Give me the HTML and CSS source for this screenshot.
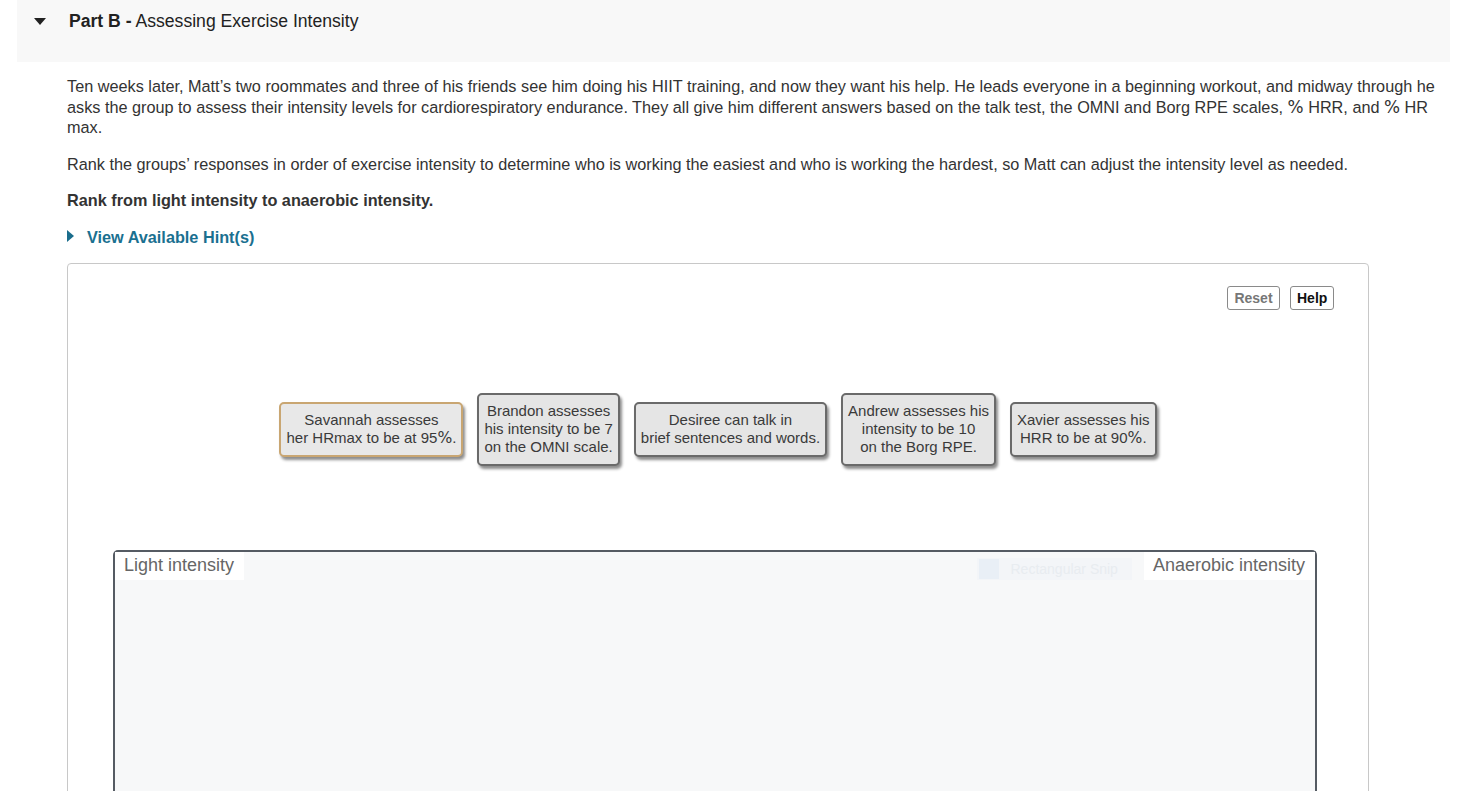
FILE: index.html
```html
<!DOCTYPE html>
<html lang="en">
<head>
<meta charset="utf-8">
<title>Part B - Assessing Exercise Intensity</title>
<link rel="stylesheet" href="styles.css">
</head>
<body>
<div class="page">
  <div class="part-header">
    <span class="caret"></span>
    <h2 class="part-title"><b>Part B -</b> Assessing Exercise Intensity</h2>
  </div>
  <div class="content">
    <p class="para">Ten weeks later, Matt’s two roommates and three of his friends see him doing his HIIT training, and now they want his help. He leads everyone in a beginning workout, and midway through he asks the group to assess their intensity levels for cardiorespiratory endurance. They all give him different answers based on the talk test, the OMNI and Borg RPE scales, <span class="pct">%</span> HRR, and <span class="pct">%</span> HR max.</p>
    <p class="para">Rank the groups’ responses in order of exercise intensity to determine who is working the easiest and who is working the hardest, so Matt can adjust the intensity level as needed.</p>
    <p class="para strong">Rank from light intensity to anaerobic intensity.</p>
    <div class="hint"><span class="hint-caret"></span><span class="hint-text">View Available Hint(s)</span></div>
    <div class="rank-box">
      <div class="toolbar">
        <button class="btn btn-reset">Reset</button>
        <button class="btn btn-help">Help</button>
      </div>
      <div class="cards">
        <div class="card card-selected">Savannah assesses<br>her HRmax to be at 95<span class="pct">%</span>.</div>
        <div class="card">Brandon assesses<br>his intensity to be 7<br>on the OMNI scale.</div>
        <div class="card">Desiree can talk in<br>brief sentences and words.</div>
        <div class="card">Andrew assesses his<br>intensity to be 10<br>on the Borg RPE.</div>
        <div class="card">Xavier assesses his<br>HRR to be at 90<span class="pct">%</span>.</div>
      </div>
      <div class="dropzone">
        <div class="dz-head">
          <span class="dz-label">Light intensity</span>
          <span class="dz-right">
            <span class="ghost"><span class="ghost-icon"></span>Rectangular Snip</span>
            <span class="dz-label">Anaerobic intensity</span>
          </span>
        </div>
      </div>
    </div>
  </div>
</div>
</body>
</html>
```

FILE: styles.css
```css
html, body {
  margin: 0;
  padding: 0;
  background: #ffffff;
  overflow: hidden;
}
body {
  font-family: "Liberation Sans", Arial, sans-serif;
  color: #333333;
}
.page {
  width: 1460px;
  height: 791px;
  overflow: hidden;
}
.part-header {
  margin: 0 10px 0 17px;
  height: 62px;
  background: #f8f8f8;
  display: flex;
  align-items: flex-start;
  padding-top: 10px;
  box-sizing: border-box;
}
.caret {
  width: 0;
  height: 0;
  border-left: 6.5px solid transparent;
  border-right: 6.5px solid transparent;
  border-top: 7px solid #222222;
  margin: 8px 0 0 17px;
}
.part-title {
  margin: 0 0 0 23px;
  font-size: 17.6px;
  font-weight: normal;
  color: #222222;
  line-height: 22px;
}
.part-title b {
  font-weight: bold;
}
.content {
  padding: 14px 20px 0 67px;
}
.para {
  margin: 0 0 16px 0;
  font-size: 16.25px;
  line-height: 20.5px;
  color: #333333;
}
.strong {
  font-weight: bold;
  margin-bottom: 17px;
}
.pct {
  font-family: "DejaVu Sans", sans-serif;
  font-size: 1.04em;
  line-height: 0.9;
}
.hint {
  display: flex;
  align-items: center;
  height: 20px;
  margin-bottom: 15px;
}
.hint-caret {
  width: 0;
  height: 0;
  border-top: 6px solid transparent;
  border-bottom: 6px solid transparent;
  border-left: 7px solid #1a6d8c;
  margin-top: -4px;
}
.hint-text {
  margin-left: 13px;
  font-weight: bold;
  font-size: 16.25px;
  color: #1a7090;
}
.rank-box {
  width: 1302px;
  height: 560px;
  box-sizing: border-box;
  border: 1px solid #c8c8c8;
  border-radius: 4px;
  padding-top: 22px;
}
.toolbar {
  display: flex;
  justify-content: flex-end;
  gap: 10px;
  padding-right: 34px;
  height: 24px;
}
.btn {
  font-family: "Liberation Sans", Arial, sans-serif;
  font-size: 14px;
  font-weight: bold;
  background: #ffffff;
  border: 1px solid #8a8a8a;
  border-radius: 3px;
  padding: 0 6px;
  height: 24px;
  line-height: 20px;
}
.btn-reset {
  color: #777777;
  width: 53px;
}
.btn-help {
  color: #111111;
  width: 44px;
}
.cards {
  height: 240px;
  display: flex;
  justify-content: center;
  align-items: center;
  gap: 14px;
  padding-left: 0;
}
.card {
  background: #e5e5e5;
  border: 2px solid #6a6a6a;
  border-radius: 5px;
  box-shadow: 2px 3px 3px rgba(0, 0, 0, 0.45);
  padding: 7px 5px 8px;
  font-size: 15px;
  line-height: 18px;
  color: #3a3a3a;
  text-align: center;
  white-space: nowrap;
}
.card-selected {
  border-color: #c9a672;
  background: #e8e8e8;
}
.dropzone {
  margin: 0 51px 0 45px;
  height: 300px;
  border: 2px solid #555b63;
  border-bottom: none;
  border-radius: 5px 5px 0 0;
  background: #f7f8f9;
}
.dz-head {
  display: flex;
  justify-content: space-between;
  align-items: flex-start;
}
.dz-right {
  display: flex;
  align-items: flex-start;
}
.dz-label {
  background: #ffffff;
  color: #666666;
  font-size: 18px;
  line-height: 26px;
  padding: 0 10px 2px 9px;
}
.ghost {
  display: flex;
  align-items: center;
  margin-top: 6px;
  margin-right: 12px;
  padding: 0 14px 0 2px;
  height: 22px;
  background: #f3f5f8;
  color: #e8ecf0;
  font-size: 14px;
}
.ghost-icon {
  width: 20px;
  height: 20px;
  background: #e9eff6;
  margin-right: 12px;
}
```
